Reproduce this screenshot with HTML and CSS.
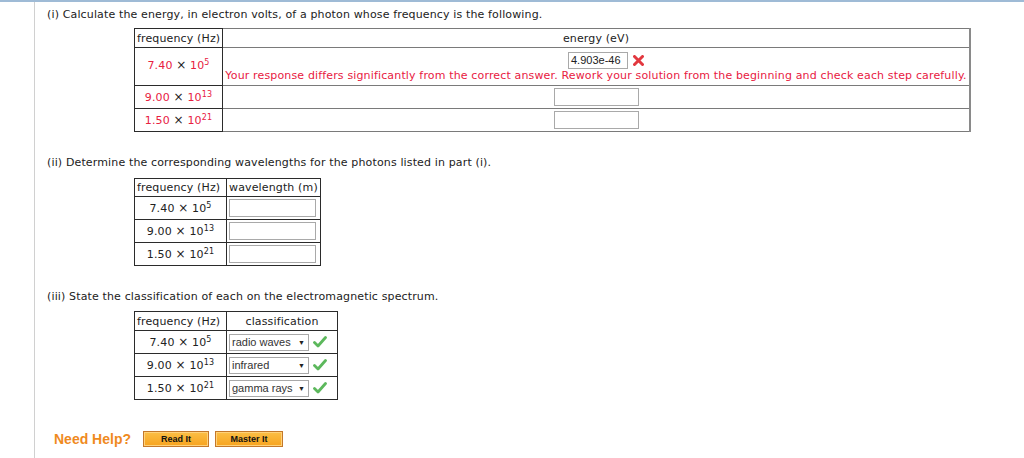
FILE: index.html
```html
<!DOCTYPE html>
<html>
<head>
<meta charset="utf-8">
<link rel="stylesheet" href="styles.css">
</head>
<body>
<div class="topbar"></div>
<div class="page">
  <div class="content">
    <p class="q q1">(i) Calculate the energy, in electron volts, of a photon whose frequency is the following.</p>
    <table class="tbl t1">
      <colgroup><col class="c1a"><col></colgroup>
      <tr class="hrow"><th class="lefth">frequency (Hz)</th><th class="righth">energy (eV)</th></tr>
      <tr class="erow">
        <td class="freq red"><span class="lift">7.40 <span class="x">&times;</span> 10<sup>5</sup></span></td>
        <td class="ans">
          <div class="ansline"><span class="inp inp-filled">4.903e-46</span><svg class="wrong" width="11" height="11" viewBox="0 0 11 11"><path d="M1.5 1.5 L9.5 9.5 M9.5 1.5 L1.5 9.5" stroke="#e2383f" stroke-width="3" stroke-linecap="round"/></svg></div>
          <div class="err">Your response differs significantly from the correct answer. Rework your solution from the beginning and check each step carefully.</div>
        </td>
      </tr>
      <tr class="row"><td class="freq red">9.00 <span class="x">&times;</span> 10<sup>13</sup></td><td class="ans"><span class="inp inp-empty"></span></td></tr>
      <tr class="row last"><td class="freq red">1.50 <span class="x">&times;</span> 10<sup>21</sup></td><td class="ans"><span class="inp inp-empty"></span></td></tr>
    </table>

    <p class="q q2">(ii) Determine the corresponding wavelengths for the photons listed in part (i).</p>
    <table class="tbl t2">
      <colgroup><col class="c2a"><col class="c2b"></colgroup>
      <tr class="hrow"><th class="lefth">frequency (Hz)</th><th class="lefth">wavelength (m)</th></tr>
      <tr class="row"><td class="freq">7.40 <span class="x">&times;</span> 10<sup>5</sup></td><td class="cellinp"><span class="inp inp-wide"></span></td></tr>
      <tr class="row"><td class="freq">9.00 <span class="x">&times;</span> 10<sup>13</sup></td><td class="cellinp"><span class="inp inp-wide"></span></td></tr>
      <tr class="row"><td class="freq">1.50 <span class="x">&times;</span> 10<sup>21</sup></td><td class="cellinp"><span class="inp inp-wide"></span></td></tr>
    </table>

    <p class="q q3">(iii) State the classification of each on the electromagnetic spectrum.</p>
    <table class="tbl t3">
      <colgroup><col class="c3a"><col class="c3b"></colgroup>
      <tr class="hrow"><th class="lefth">frequency (Hz)</th><th class="centerh">classification</th></tr>
      <tr class="row"><td class="freq">7.40 <span class="x">&times;</span> 10<sup>5</sup></td><td class="cellsel"><span class="sel"><span class="selt">radio waves</span><span class="arr">&#9660;</span></span><svg class="ok" width="14" height="12" viewBox="0 0 14 12"><path d="M1.5 6.5 L5 10 L12.5 1.5" fill="none" stroke="#5cb85c" stroke-width="2.8" stroke-linecap="round" stroke-linejoin="round"/></svg></td></tr>
      <tr class="row"><td class="freq">9.00 <span class="x">&times;</span> 10<sup>13</sup></td><td class="cellsel"><span class="sel"><span class="selt">infrared</span><span class="arr">&#9660;</span></span><svg class="ok" width="14" height="12" viewBox="0 0 14 12"><path d="M1.5 6.5 L5 10 L12.5 1.5" fill="none" stroke="#5cb85c" stroke-width="2.8" stroke-linecap="round" stroke-linejoin="round"/></svg></td></tr>
      <tr class="row"><td class="freq">1.50 <span class="x">&times;</span> 10<sup>21</sup></td><td class="cellsel"><span class="sel"><span class="selt">gamma rays</span><span class="arr">&#9660;</span></span><svg class="ok" width="14" height="12" viewBox="0 0 14 12"><path d="M1.5 6.5 L5 10 L12.5 1.5" fill="none" stroke="#5cb85c" stroke-width="2.8" stroke-linecap="round" stroke-linejoin="round"/></svg></td></tr>
    </table>

    <div class="help">
      <span class="needhelp">Need Help?</span>
      <span class="btn btn-read">Read It</span>
      <span class="btn btn-master">Master It</span>
    </div>
  </div>
</div>
</body>
</html>
```

FILE: styles.css
```css
html, body {
  margin: 0;
  padding: 0;
  background: #fff;
}
body {
  font-family: "DejaVu Sans", Verdana, sans-serif;
  font-size: 11px;
  letter-spacing: 0.14px;
  color: #222;
  height: 458px;
  overflow: hidden;
}
.topbar {
  height: 2px;
  background: #9fbbd6;
}
.page {
  margin-left: 34px;
  border-left: 1px solid #d0d0d0;
  height: 456px;
}
.content {
  padding-left: 12px;
  padding-top: 6px;
}
.q {
  margin: 0;
  line-height: 14px;
  white-space: nowrap;
}
.q2 { margin-top: 24px; }
.q3 { margin-top: 24px; }
.tbl {
  border-collapse: collapse;
  margin-left: 87px;
  table-layout: fixed;
}
.t1 { margin-top: 6px; width: 837px; border-right: 2px solid #8a8a8a; border-bottom: 1px solid #777; }
.t2 { margin-top: 8px; width: 186px; }
.t3 { margin-top: 7px; width: 203px; }
.c1a { width: 88px; }
.c2a { width: 92px; }
.c2b { width: 94px; }
.c3a { width: 92px; }
.c3b { width: 111px; }
.tbl th, .tbl td {
  border: 1px solid #2b2b2b;
  padding: 0;
  font-weight: normal;
}
.tbl th {
  height: 18px;
  white-space: nowrap;
}
.t2 th { height: 17px; }
.lefth { text-align: left; padding-left: 2px !important; }
.righth { text-align: center; }
.centerh { text-align: center; }
.t1 .righth, .t1 .ans { border-color: #7a7a7a; }
.t1 .last .ans { border-top-color: #111; }
.row td { height: 22px; }
.erow td { height: 37px; }
.freq {
  text-align: center;
  white-space: nowrap;
  vertical-align: middle;
}
.lift { position: relative; top: -2px; }
.red { color: #e8203f; }
.red .x { color: #222; }
.x { font-size: 12px; }
sup {
  font-size: 8px;
  vertical-align: 0;
  position: relative;
  top: -4px;
}
.ans {
  text-align: center;
  vertical-align: middle;
}
.ansline {
  display: flex;
  justify-content: center;
  align-items: center;
  gap: 5px;
  height: 18px;
  margin-top: 1px;
  padding-left: 20px;
}
.err {
  color: #e8203f;
  white-space: nowrap;
  line-height: 14px;
  letter-spacing: 0.15px;
}
.inp {
  display: inline-block;
  box-sizing: border-box;
  border: 1px solid #a9a9a9;
  background: #fff;
  font-family: "Liberation Sans", Arial, sans-serif;
  font-size: 11px;
  letter-spacing: 0;
  color: #222;
  text-align: left;
  vertical-align: middle;
}
.inp-filled {
  width: 60px;
  height: 17px;
  line-height: 15px;
  padding-left: 2px;
}
.inp-empty {
  width: 85px;
  height: 18px;
}
.wrong { display: block; }
.cellinp { padding-left: 1px !important; vertical-align: middle; }
.inp-wide {
  width: 87px;
  height: 18px;
  margin-left: 1px;
}
.cellsel {
  white-space: nowrap;
  vertical-align: middle;
  padding-left: 1px !important;
}
.sel {
  display: inline-flex;
  align-items: center;
  justify-content: space-between;
  box-sizing: border-box;
  width: 80px;
  height: 17px;
  margin-left: 1px;
  border: 1px solid #a9a9a9;
  font-family: "Liberation Sans", Arial, sans-serif;
  font-size: 11px;
  letter-spacing: 0;
  color: #333;
  padding: 0 3px 0 2px;
  vertical-align: middle;
}
.arr { font-size: 7px; color: #222; }
.ok {
  vertical-align: middle;
  margin-left: 4px;
}
.help {
  margin-top: 30px;
  margin-left: 7px;
  display: flex;
  align-items: center;
  height: 18px;
}
.needhelp {
  font-family: "Liberation Sans", Arial, sans-serif;
  font-weight: bold;
  font-size: 14px;
  letter-spacing: 0;
  color: #ef8a1e;
  margin-right: 12px;
}
.btn {
  box-sizing: border-box;
  height: 16px;
  border: 1px solid #c4782a;
  box-shadow: inset 0 0 0 1px #ffd27a;
  background: linear-gradient(#fbbf46, #f7a31e);
  font-family: "Liberation Sans", Arial, sans-serif;
  font-weight: bold;
  font-size: 9px;
  letter-spacing: 0;
  color: #111;
  display: inline-flex;
  align-items: center;
  justify-content: center;
}
.btn-read { width: 66px; margin-right: 6px; }
.btn-master { width: 68px; }
```
